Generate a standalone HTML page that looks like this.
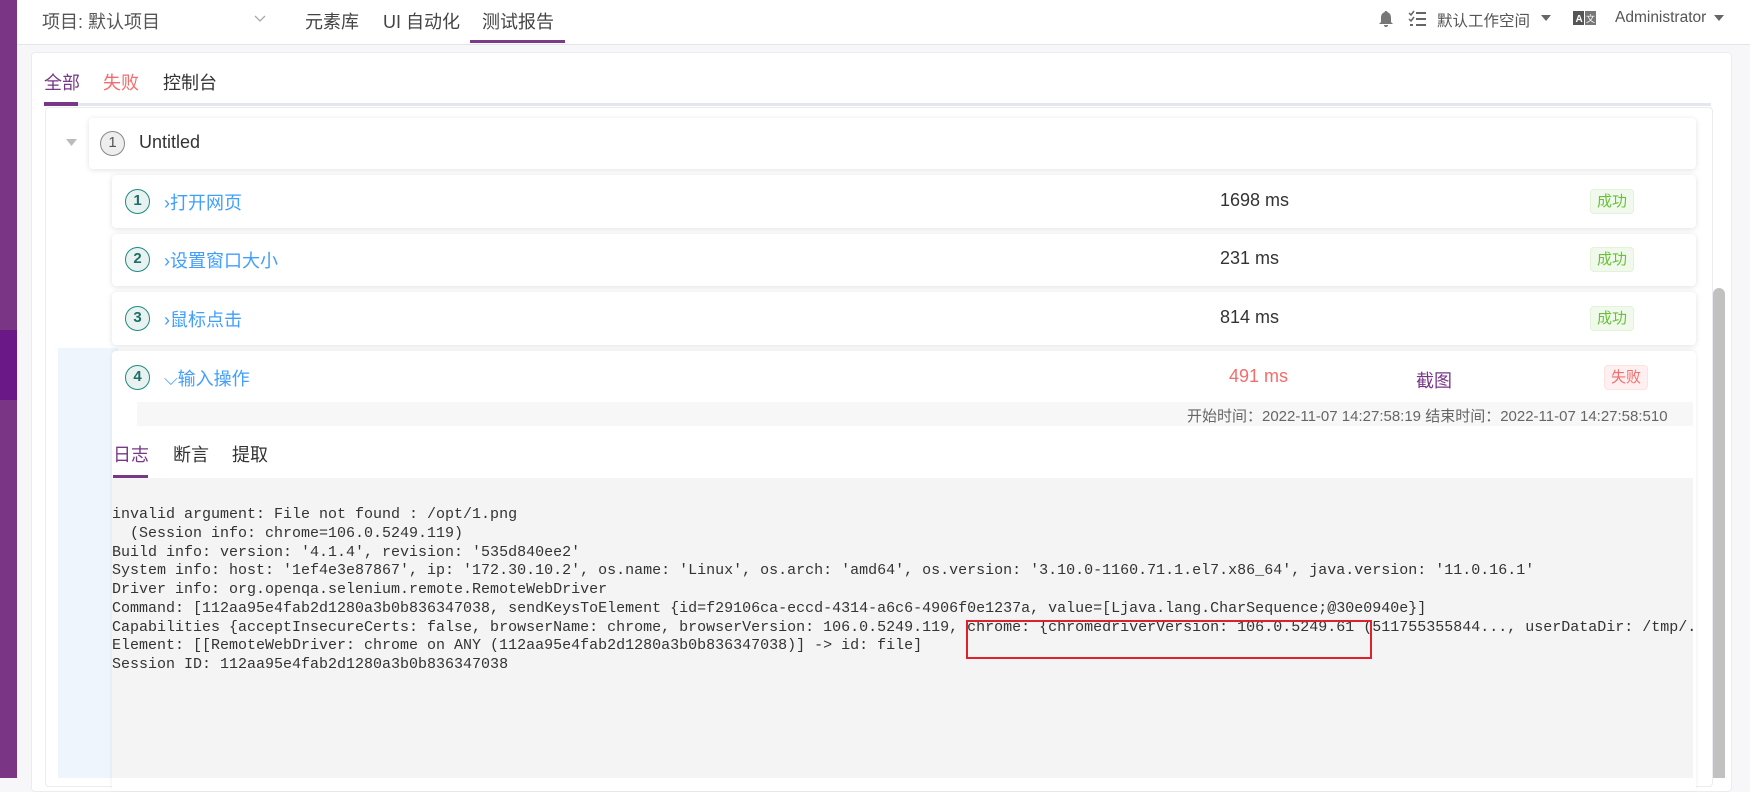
<!DOCTYPE html>
<html><head><meta charset="utf-8"><style>
*{margin:0;padding:0;box-sizing:border-box}
body{width:1750px;height:778px;overflow:hidden;background:#f7f7f9;font-family:"Liberation Sans","Noto Sans CJK SC",sans-serif;color:#333;position:relative}
.a{position:absolute}
.side{left:0;top:0;width:17px;height:778px;background:#7a3685}
.hdr{left:17px;top:0;width:1733px;height:45px;background:#fff;border-bottom:1px solid #e4e4e8}
.t{position:absolute;white-space:nowrap}
.card{left:31px;top:52px;width:1701px;height:740px;background:#fff;border:1px solid #ececf0;border-radius:4px}
.rc{position:absolute;background:#fff;border-radius:4px;box-shadow:0 1px 6px rgba(0,0,0,.12)}
.circ{position:absolute;width:25px;height:25px;border-radius:50%;border:1.5px solid #1e8a80;background:#e8f2f1;color:#1e6f68;font-size:15px;font-weight:bold;text-align:center;line-height:22px}
.tag{position:absolute;height:25px;width:44px;border-radius:4px;font-size:15px;text-align:center;line-height:23px}
.ok{background:#f0f9eb;border:1px solid #e1f3d8;color:#67c23a}
.bad{background:#fef0f0;border:1px solid #fde2e2;color:#f56c6c}
.lk{color:#409eff;font-size:18px}
.log{left:112px;top:478px;width:1581px;height:300px;background:#f4f4f4;overflow:hidden}
pre{position:absolute;left:0;top:28px;font-family:"Liberation Mono","Noto Sans CJK SC",monospace;font-size:15px;line-height:18.75px;color:#333;white-space:pre}
</style></head><body>
<div class="a side"></div>
<div class="a" style="left:0;top:330px;width:17px;height:70px;background:#6a1888"></div>
<div class="a hdr">
 <div class="t" style="left:25px;top:8px;font-size:18px;color:#555">项目: 默认项目</div>
 <svg class="a" style="left:237px;top:14px" width="12" height="10"><path d="M1 2 L6 7 L11 2" fill="none" stroke="#aaa" stroke-width="1.3"/></svg>
 <div class="t" style="left:288px;top:8px;font-size:18px;color:#444">元素库</div>
 <div class="t" style="left:366px;top:8px;font-size:18px;color:#444">UI 自动化</div>
 <div class="t" style="left:465px;top:8px;font-size:18px;color:#444">测试报告</div>
 <div class="a" style="left:453px;top:40px;width:95px;height:3px;background:#7b3a8a"></div>
 <svg class="a" style="left:1361px;top:10px" width="16" height="18"><path d="M8 1c-1 0-1.5.6-1.5 1.3C4 3 3 5 3 8v4l-2 2h14l-2-2V8c0-3-1-5-3.5-5.7C9.5 1.6 9 1 8 1zM6 15a2 2 0 0 0 4 0z" fill="#777"/></svg>
 <svg class="a" style="left:1391px;top:10px" width="18" height="17"><path d="M1 3l2 2 3-4M1 9l2 2 3-4" fill="none" stroke="#666" stroke-width="1.5"/><rect x="8" y="2" width="10" height="2" fill="#666"/><rect x="8" y="8" width="10" height="2" fill="#666"/><rect x="8" y="14" width="10" height="2" fill="#666"/><rect x="2" y="14" width="3" height="2" fill="#666"/></svg>
 <div class="t" style="left:1420px;top:9px;font-size:15.5px;color:#555">默认工作空间</div>
 <svg class="a" style="left:1524px;top:15px" width="10" height="7"><path d="M0 0h10L5 6z" fill="#666"/></svg>
 <svg class="a" style="left:1556px;top:11px" width="24" height="15"><rect width="11" height="14" fill="#555"/><rect x="12" width="11" height="14" fill="#777"/><text x="2.5" y="11" font-size="10" font-weight="bold" fill="#fff" font-family="Liberation Sans">A</text><text x="13" y="11" font-size="9" fill="#fff" font-family="Noto Sans CJK SC">文</text></svg>
 <div class="t" style="left:1598px;top:9px;font-size:15.5px;color:#555">Administrator</div>
 <svg class="a" style="left:1697px;top:15px" width="10" height="7"><path d="M0 0h10L5 6z" fill="#666"/></svg>
</div>
<div class="a card"></div>
<div class="t" style="left:44px;top:69px;font-size:18px;color:#783787">全部</div>
<div class="t" style="left:103px;top:69px;font-size:18px;color:#f56c6c">失败</div>
<div class="t" style="left:163px;top:69px;font-size:18px;color:#333">控制台</div>
<div class="a" style="left:44px;top:103px;width:1667px;height:3px;background:#e4e7ed"></div>
<div class="a" style="left:44px;top:102px;width:34px;height:4px;background:#783787"></div>
<div class="a" style="left:45px;top:107px;width:1668px;height:680px;border:1px solid #ececf0;border-radius:4px;background:#fff"></div>
<div class="a" style="left:1713px;top:288px;width:12px;height:490px;background:#c1c1c1;border-radius:6px 6px 0 0"></div>
<div class="a" style="left:58px;top:348px;width:60px;height:430px;background:#eef5fd"></div>
<svg class="a" style="left:66px;top:139px" width="11" height="8"><path d="M0 0h11L5.5 7z" fill="#bbb"/></svg>
<div class="rc" style="left:89px;top:118px;width:1607px;height:51px"></div>
<div class="circ" style="left:100px;top:131px;border-color:#888;background:#eee;color:#555;font-weight:normal">1</div>
<div class="t" style="left:139px;top:132px;font-size:18px;color:#333">Untitled</div>

<div class="rc" style="left:112px;top:175px;width:1584px;height:53px"></div>
<div class="circ" style="left:125px;top:189px">1</div>
<div class="t lk" style="left:164px;top:189px">›打开网页</div>
<div class="t" style="left:1220px;top:190px;font-size:18px">1698 ms</div>
<div class="tag ok" style="left:1590px;top:189px">成功</div>

<div class="rc" style="left:112px;top:234px;width:1584px;height:52px"></div>
<div class="circ" style="left:125px;top:247px">2</div>
<div class="t lk" style="left:164px;top:247px">›设置窗口大小</div>
<div class="t" style="left:1220px;top:248px;font-size:18px">231 ms</div>
<div class="tag ok" style="left:1590px;top:247px">成功</div>

<div class="rc" style="left:112px;top:292px;width:1584px;height:53px"></div>
<div class="circ" style="left:125px;top:306px">3</div>
<div class="t lk" style="left:164px;top:306px">›鼠标点击</div>
<div class="t" style="left:1220px;top:307px;font-size:18px">814 ms</div>
<div class="tag ok" style="left:1590px;top:306px">成功</div>

<div class="rc" style="left:112px;top:351px;width:1584px;height:440px;box-shadow:0 -1px 4px rgba(0,0,0,.08)"></div>
<div class="circ" style="left:125px;top:365px">4</div>
<div class="t lk" style="left:164px;top:365px">⌵输入操作</div>
<div class="t" style="left:1229px;top:366px;font-size:18px;color:#f56c6c">491 ms</div>
<div class="t" style="left:1416px;top:367px;font-size:18px;color:#783787">截图</div>
<div class="tag bad" style="left:1604px;top:365px">失败</div>
<div class="a" style="left:137px;top:402px;width:1556px;height:24px;background:#f7f7f7"></div>
<div class="t" style="left:1187px;top:405px;font-size:15px;color:#666">开始时间：2022-11-07 14:27:58:19 结束时间：2022-11-07 14:27:58:510</div>
<div class="t" style="left:113px;top:441px;font-size:18px;color:#783787">日志</div>
<div class="t" style="left:173px;top:441px;font-size:18px;color:#333">断言</div>
<div class="t" style="left:232px;top:441px;font-size:18px;color:#333">提取</div>
<div class="a" style="left:113px;top:475px;width:35px;height:3px;background:#783787"></div>
<div class="a log"><pre>invalid argument: File not found : /opt/1.png
  (Session info: chrome=106.0.5249.119)
Build info: version: '4.1.4', revision: '535d840ee2'
System info: host: '1ef4e3e87867', ip: '172.30.10.2', os.name: 'Linux', os.arch: 'amd64', os.version: '3.10.0-1160.71.1.el7.x86_64', java.version: '11.0.16.1'
Driver info: org.openqa.selenium.remote.RemoteWebDriver
Command: [112aa95e4fab2d1280a3b0b836347038, sendKeysToElement {id=f29106ca-eccd-4314-a6c6-4906f0e1237a, value=[Ljava.lang.CharSequence;@30e0940e}]
Capabilities {acceptInsecureCerts: false, browserName: chrome, browserVersion: 106.0.5249.119, chrome: {chromedriverVersion: 106.0.5249.61 (511755355844..., userDataDir: /tmp/.org.chromium.Chromium}}
Element: [[RemoteWebDriver: chrome on ANY (112aa95e4fab2d1280a3b0b836347038)] -> id: file]
Session ID: 112aa95e4fab2d1280a3b0b836347038</pre></div>
<div class="a" style="left:966px;top:620px;width:406px;height:39px;border:2px solid #e0202a"></div>
</body></html>
